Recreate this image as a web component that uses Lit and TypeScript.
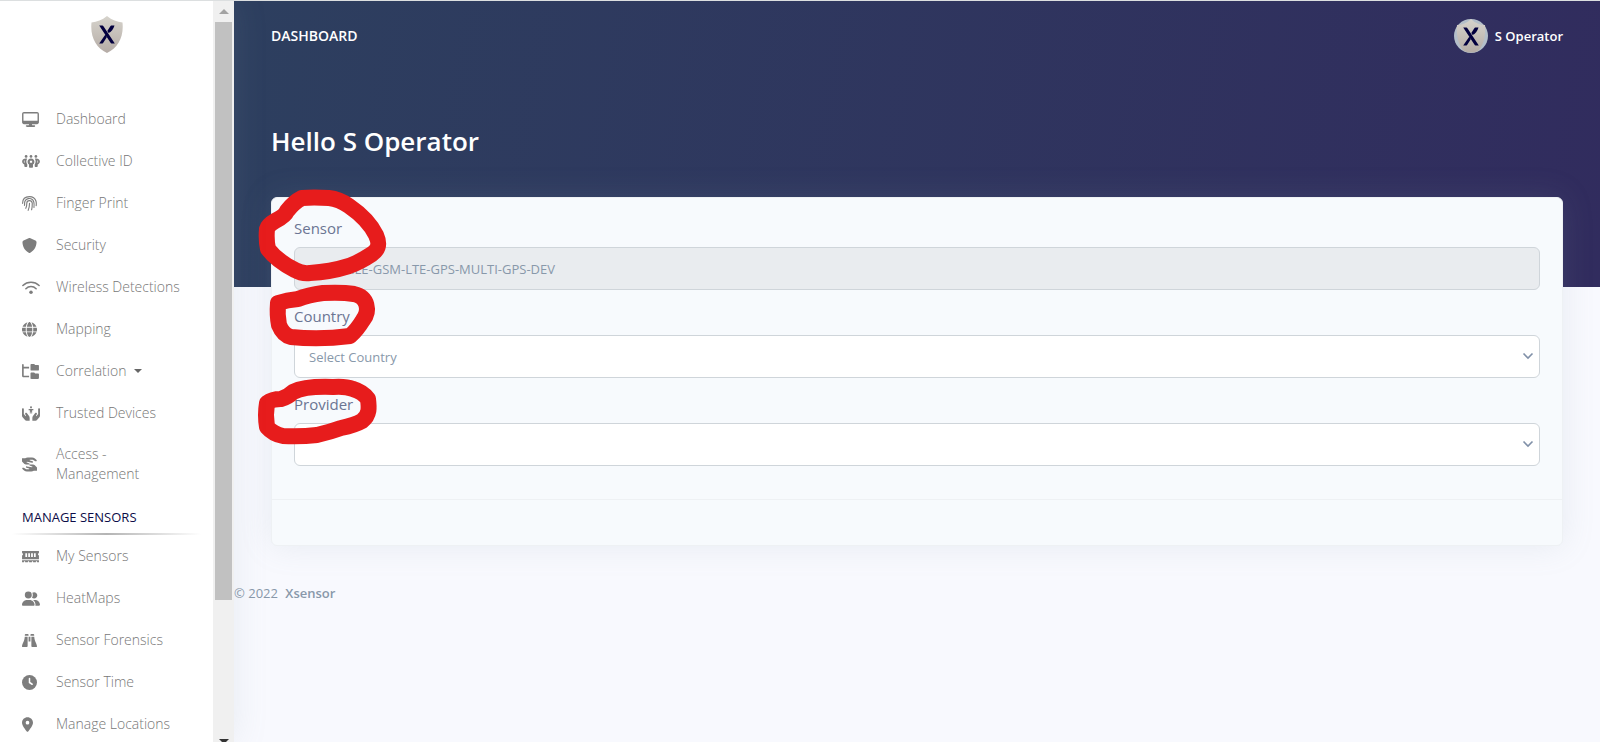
import { LitElement, html, css, svg, type TemplateResult } from "lit";
import { customElement } from "lit/decorators.js";

interface NavItem {
  label: string;
  icon: TemplateResult;
  box: string;
  width: number;
  caret?: boolean;
}

const fingerprint = svg`<g fill="none" stroke="currentColor" stroke-width="38" stroke-linecap="round">
  <path d="M20 250C20 90 130 20 256 20c100 0 190 60 220 150 16 50 14 110 8 160"/>
  <path d="M84 320c10-50-2-90 16-142 44-96 170-120 252-58 66 50 70 140 56 270"/>
  <path d="M130 420c24-52 36-110 34-170 0-120 176-124 186 0 2 80-4 150-22 220"/>
  <path d="M256 250c2 90-12 164-46 240"/></g>`;

const main: NavItem[] = [
  {
    label: "Dashboard", box: "0 0 576 512", width: 17,
    icon: svg`<path d="M64 0C29 0 0 29 0 64v288c0 35 29 64 64 64h176l-11 32h-69c-18 0-32 14-32 32s14 32 32 32h256c18 0 32-14 32-32s-14-32-32-32h-69l-11-32h176c35 0 64-29 64-64V64c0-35-29-64-64-64zM528 48v248H48V48z"/>`,
  },
  {
    label: "Collective ID", box: "0 0 640 512", width: 18,
    icon: svg`<circle cx="146" cy="76" r="48"/><circle cx="320" cy="76" r="48"/><circle cx="494" cy="76" r="48"/>
      <path fill-rule="evenodd" d="M320 148c74 0 122 52 122 116 0 44-20 78-52 96v84c0 20-14 36-34 36h-72c-20 0-34-16-34-36v-84c-32-18-52-52-52-96 0-64 48-116 122-116zm-40 80v70h80v-70z"/>
      <path d="M140 148c20 0 36 4 44 14-40 54-40 146 4 200v52c0 20-16 34-34 34h-40c-18 0-32-14-32-34v-52C40 336 4 300 4 252c0-60 60-104 136-104zM500 148c-20 0-36 4-44 14 40 54 40 146-4 200v52c0 20 16 34 34 34h40c18 0 32-14 32-34v-52c42-26 78-62 78-110 0-60-60-104-136-104z"/>
      <path stroke="#fff" stroke-width="22" d="M84 220v80M556 220v80"/>`,
  },
  { label: "Finger Print", box: "0 0 512 512", width: 15, icon: fingerprint },
  {
    label: "Security", box: "0 0 512 512", width: 15,
    icon: svg`<path d="M256 0c5 0 9 1 13 3l188 80c22 9 39 31 39 57-1 99-42 281-214 363-16 8-36 8-52 0C58 421 17 239 16 140c0-26 17-48 39-57L243 3c4-2 8-3 13-3z"/>`,
  },
  {
    label: "Wireless Detections", box: "0 0 640 512", width: 18,
    icon: svg`<path fill="none" stroke="currentColor" stroke-width="54" stroke-linecap="round" d="M32 184C190 30 450 30 608 184M138 298c102-98 262-98 364 0"/><circle cx="320" cy="424" r="62"/>`,
  },
  {
    label: "Mapping", box: "0 0 512 512", width: 15,
    icon: svg`<path d="M352 256c0 22-1 44-3 64H163a694 694 0 0 1 0-128h186c2 20 3 42 3 64zm29-64h123a257 257 0 0 1 0 128H381a700 700 0 0 0 0-128zm112-32H377c-10-64-30-117-55-152 78 21 142 77 171 152zm-148 0H167c6-36 16-68 27-94 11-24 23-41 35-52 11-11 20-14 27-14s16 3 27 14c12 11 24 28 35 52 11 26 21 58 27 94zm-210 0H19C48 85 112 29 190 8c-25 35-45 88-55 152zM8 192h123a700 700 0 0 0 0 128H8a257 257 0 0 1 0-128zm186 254c-11-26-21-58-27-94h178c-6 36-16 68-27 94-11 24-23 41-35 52-11 11-20 14-27 14s-16-3-27-14c-12-11-24-28-35-52zm-59-94c10 64 30 117 55 152-78-21-142-77-171-152zm187 152c25-35 45-88 55-152h116c-29 75-93 131-171 152z"/>`,
  },
  {
    label: "Correlation", box: "0 0 576 512", width: 17, caret: true,
    icon: svg`<path d="M56 24c0-13-11-24-28-24S0 11 0 24v376c0 30 26 56 56 56h184v-56H56V152h184V96H56z"/>
      <path d="M320 0c-18 0-32 14-32 32v160c0 18 14 32 32 32h224c18 0 32-14 32-32V64c0-18-14-32-32-32h-98l-24-24c-5-5-12-8-20-8zM320 288c-18 0-32 14-32 32v160c0 18 14 32 32 32h224c18 0 32-14 32-32V352c0-18-14-32-32-32h-98l-24-24c-5-5-12-8-20-8z"/>`,
  },
  {
    label: "Trusted Devices", box: "0 0 640 512", width: 18,
    icon: svg`<path d="M0 104c0-20 14-36 32-36s34 16 34 36v168l64 80c12-8 14-22 6-34l-22-32c-12-18-8-40 8-52 16-10 36-8 48 8l74 92c20 24 28 50 28 80v98H160c-24 0-44-10-60-30L22 388C6 368 0 350 0 326zM640 104c0-20-14-36-32-36s-34 16-34 36v168l-64 80c-12-8-14-22-6-34l22-32c12-18 8-40-8-52-16-10-36-8-48 8l-74 92c-20 24-28 50-28 80v98h112c24 0 44-10 60-30l78-94c16-20 22-38 22-62z"/>
      <circle cx="320" cy="38" r="36"/><path d="M236 96h168v48h-44v112h-28v-60h-24v60h-28V144h-44z"/>`,
  },
  {
    label: "Access - Management", box: "0 0 512 512", width: 15,
    icon: svg`<path d="M0 40h110c26-20 52-24 84-24h150c34 0 70 10 96 34l58 54c12 12 10 30-4 40-12 8-28 6-40-2l-88-46h-90c-18 0-20 18-4 22l90 26c16 6 22 22 14 36-6 12-18 16-32 12l-174-34-20 20 98 44c24 12 18 34-8 34H130c-36-4-60-22-80-50L0 150z"/>
      <path d="M512 472H402c-26 20-52 24-84 24H168c-34 0-70-10-96-34L14 408c-12-12-10-30 4-40 12-8 28-6 40 2l88 46h90c18 0 20-18 4-22l-90-26c-16-6-22-22-14-36 6-12 18-16 32-12l174 34 20-20-98-44c-24-12-18-34 8-34h110c36 4 60 22 80 50l50 56z"/>`,
  },
];

const sensors: NavItem[] = [
  {
    label: "My Sensors", box: "0 0 576 512", width: 17,
    icon: svg`<path fill-rule="evenodd" d="M0 64h576v70c-22 8-32 24-32 42s10 34 32 42v134H0V218c22-8 32-24 32-42s-10-34-32-42zm112 80v128h60V144zm98 0v128h60V144zm98 0v128h60V144zm98 0v128h60V144z"/><path d="M0 384h576v64h-64v-30h-40v30h-96v-30h-40v30h-96v-30h-40v30h-96v-30H64v30H0z"/>`,
  },
  {
    label: "HeatMaps", box: "0 0 640 512", width: 18,
    icon: svg`<circle cx="224" cy="128" r="124"/><path d="M0 484c0-100 80-176 176-176h96c96 0 176 76 176 176 0 16-12 28-28 28H28c-16 0-28-12-28-28zM610 512H472c6-10 8-20 8-30 0-72-34-134-86-174h74c96 0 172 78 172 174 0 16-14 30-30 30zM432 256c-30 0-58-12-78-32 20-26 30-60 30-96 0-28-6-54-18-76 18-14 42-22 66-22 62 0 112 50 112 112s-50 114-112 114z"/>`,
  },
  {
    label: "Sensor Forensics", box: "0 0 512 512", width: 15,
    icon: svg`<path d="M126 32h72c16 0 26 12 26 26v38H96V62c0-18 12-30 30-30zM386 32h-72c-16 0-26 12-26 26v38h128V62c0-18-12-30-30-30zM94 128h98v326c0 14-12 26-26 26H26c-16 0-28-14-26-30 8-100 82-150 94-322zM418 128h-98v326c0 14 12 26 26 26h140c16 0 28-14 26-30-8-100-82-150-94-322zM224 128h64v160h-64z"/>`,
  },
  {
    label: "Sensor Time", box: "0 0 512 512", width: 15,
    icon: svg`<circle cx="256" cy="256" r="256"/><path fill="none" stroke="#fff" stroke-width="52" stroke-linecap="round" d="M256 120v136l90 60"/>`,
  },
  {
    label: "Manage Locations", box: "0 0 384 512", width: 11,
    icon: svg`<path fill-rule="evenodd" d="M216 499c51-64 168-220 168-307C384 86 298 0 192 0S0 86 0 192c0 87 117 243 168 307 12 15 36 15 48 0zM192 128a64 64 0 1 1 0 128 64 64 0 1 1 0-128z"/>`,
  },
];

const shield = (round: boolean) => svg`
  <defs>
    <linearGradient id="metal" x1="0" y1="0" x2="0" y2="1">
      <stop offset="0" stop-color="#d6d3cc"/><stop offset="1" stop-color="#b5aca6"/>
    </linearGradient>
  </defs>
  ${round ? svg`<circle cx="17" cy="17" r="17" fill="#b4bfca"/>` : null}
  <path fill="url(#metal)" d=${round
    ? "M17 0c4 4 9 6 14 6 1 12-2 21-7 26a17 17 0 0 1-14 0C5 27 2 18 3 6c5 0 10-2 14-6z"
    : "M16 0c5 4 10 6 15.500 6.500C33 21 27 32 16 37 5 32-1 21 .5 6.500 6 6 11 4 16 0z"}/>
  <g transform=${round ? "translate(1 -1)" : "translate(0 0)"} fill="#03003f">
    <path d="M8.200 9.500h2.600c1 0 1.500.4 2 1.200L23.800 27.500h-2.600c-1 0-1.500-.4-2-1.200z"/>
    <path d="M23.500 9.500h-2.700c-.9 0-1.300.4-1.800 1.200L16.300 15l1.300 2c2.600-1 4.900-4 5.900-7.500zM14.400 18.500L8.200 27.500h2.600c.9 0 1.300-.4 1.800-1.200l3.300-5.300z"/>
  </g>`;

@customElement("app-root")
export class AppRoot extends LitElement {
  static styles = css`
    :host {
      display: flex;
      height: 100vh;
      overflow: hidden;
      box-sizing: border-box;
      border-top: 1px solid #dcdfe0;
      font-family: "Open Sans", sans-serif;
      font-size: 13px;
      line-height: 20px;
      color: #8898aa;
      background: #f8f9fe;
    }
    * { box-sizing: border-box; }
    a { color: inherit; text-decoration: none; }
    svg { display: block; }

    .side {
      position: relative;
      z-index: 1;
      display: flex;
      flex: none;
      width: 234px;
      background: #fff;
      box-shadow: 0 0 32px rgba(136, 152, 170, 0.15);
    }
    .nav { flex: 1; overflow: hidden; font-size: 14px; }
    .brand { display: flex; justify-content: center; padding: 15px 0 45px; }
    .list { list-style: none; margin: 0; padding: 0; }
    .item {
      display: flex;
      align-items: center;
      min-height: 42px;
      padding: 10px 32px 10px 22px;
      color: #777;
      font-weight: 300;
    }
    .glyph { flex: none; width: 34px; color: #7d7d7d; }
    .glyph svg { height: 15px; fill: currentColor; }
    .caret {
      margin-left: 8px;
      border: 4px solid transparent;
      border-top-color: #666;
      border-bottom: 0;
    }
    .group {
      margin: 0;
      padding: 13px 22px 6px;
      font-size: 13px;
      font-weight: 400;
      color: #0c0c48;
    }
    .rule {
      height: 2px;
      margin: 0 12px;
      border: 0;
      background: linear-gradient(90deg, transparent, #b4b4b4 50%, transparent);
    }

    .scroll {
      display: flex;
      flex-direction: column;
      flex: none;
      align-items: center;
      width: 21px;
      background: #f0f0f0;
    }
    .up, .down { border: 5px solid transparent; }
    .up { margin: 8px 0; border-top: 0; border-bottom-color: #a3a3a3; }
    .thumb { width: 17px; height: 78%; background: #c1c1c1; }
    .down { margin: auto 0 -2px; border-top-color: #333; border-bottom: 0; }

    .main { position: relative; flex: 1; min-width: 0; }
    .hero {
      height: 286px;
      padding: 18px 37px 0;
      color: #fff;
      background: linear-gradient(100deg, #2d3f5f, #312c5e);
    }
    .top { display: flex; align-items: center; justify-content: space-between; font-weight: 600; }
    .title { font-size: 14px; }
    .user { display: flex; align-items: center; gap: 7px; }
    .hello { margin: 70px 0 0; font-size: 26px; line-height: 36px; font-weight: 600; }
    .card {
      margin: -90px 37px 0;
      border: 1px solid #eef1f4;
      border-radius: 6px;
      background: #f7fafd;
      box-shadow: 0 0 32px rgba(136, 152, 170, 0.15);
    }
    .form { padding: 18px 22px 33px; }
    .field { position: relative; display: flex; flex-direction: column; margin-bottom: 14px; }
    .field:last-child { margin-bottom: 0; }
    .label { margin-bottom: 7px; font-size: 15px; line-height: 24px; color: #6b7593; }
    .control {
      width: 100%;
      height: 43px;
      padding: 0 14px;
      border: 1px solid #cfd5da;
      border-radius: 6px;
      font: inherit;
      color: #8898aa;
      background: #fff;
      appearance: none;
    }
    .control:disabled { background: #e9ecef; opacity: 1; }
    .chevron { position: absolute; right: 6px; bottom: 16px; pointer-events: none; }
    .foot { height: 46px; border-top: 1px solid #eef1f4; }
    .copy { margin: 37px 0 0; }
    .copy a { margin-left: 4px; font-weight: 600; }
    .marks { position: absolute; left: 20px; top: 180px; pointer-events: none; }
  `;

  private item(i: NavItem) {
    return html`<li><a class="item" href="#">
      <span class="glyph"><svg viewBox=${i.box} width=${i.width} aria-hidden="true">${i.icon}</svg></span>
      <span>${i.label}</span>${i.caret ? html`<span class="caret"></span>` : null}
    </a></li>`;
  }

  private chevron() {
    return html`<svg class="chevron" width="12" height="12" viewBox="0 0 12 12" aria-hidden="true">
      <path d="M1.500 3.500 6 8l4.500-4.500" fill="none" stroke="#8090a8" stroke-width="1.600"/></svg>`;
  }

  render() {
    return html`
      <aside class="side">
        <nav class="nav">
          <a class="brand" href="#" aria-label="Xsensor"><svg width="32" height="37" viewBox="0 0 32 37">${shield(false)}</svg></a>
          <ul class="list">${main.map((i) => this.item(i))}</ul>
          <h6 class="group">MANAGE SENSORS</h6>
          <hr class="rule" />
          <ul class="list">${sensors.map((i) => this.item(i))}</ul>
        </nav>
        <div class="scroll" aria-hidden="true">
          <span class="up"></span><span class="thumb"></span><span class="down"></span>
        </div>
      </aside>
      <main class="main">
        <header class="hero">
          <div class="top">
            <a class="title" href="#">DASHBOARD</a>
            <a class="user" href="#"><svg width="34" height="34" viewBox="0 0 34 34" aria-hidden="true">${shield(true)}</svg>S Operator</a>
          </div>
          <h1 class="hello">Hello S Operator</h1>
        </header>
        <section class="card">
          <form class="form">
            <div class="field">
              <label class="label" for="sensor">Sensor</label>
              <input class="control" id="sensor" disabled value="X-MOBILE-GSM-LTE-GPS-MULTI-GPS-DEV" />
            </div>
            <div class="field">
              <label class="label" for="country">Country</label>
              <select class="control" id="country"><option>Select Country</option></select>
              ${this.chevron()}
            </div>
            <div class="field">
              <label class="label" for="provider">Provider</label>
              <select class="control" id="provider"><option></option></select>
              ${this.chevron()}
            </div>
          </form>
          <div class="foot"></div>
        </section>
        <p class="copy">© 2022 <a href="#">Xsensor</a></p>
        <svg class="marks" width="140" height="270" viewBox="254 181 140 270" fill="none" stroke="#e71c1c" stroke-width="16" stroke-linejoin="round" aria-hidden="true">
          <path d="M302 198Q313 197 329 198Q339 199 349 206Q368 219 376 235C380 244 379 249 372 254Q360 262 349 266Q330 272 310 273Q302 274 295 270Q277 261 268 249Q266 240 267 229Q268 225 275 221Q285 216 287 211Q294 202 302 198Z"/>
          <path d="M278 303Q277 315 279 325Q283 335 291 337Q320 340 350 336Q357 330 363 320C370 311 368 297 354 294Q342 292 323 293Q308 295 298 299Q287 300 278 303Z"/>
          <path d="M267 403Q265 415 267 427Q273 434 283 436Q300 437 317 435Q330 432 341 428Q355 425 362 421C370 415 369 407 368 399Q363 392 353 389Q345 386 333 387Q305 386 293 392Q288 397 281 399Q272 399 267 403Z"/>
        </svg>
      </main>`;
  }
}
